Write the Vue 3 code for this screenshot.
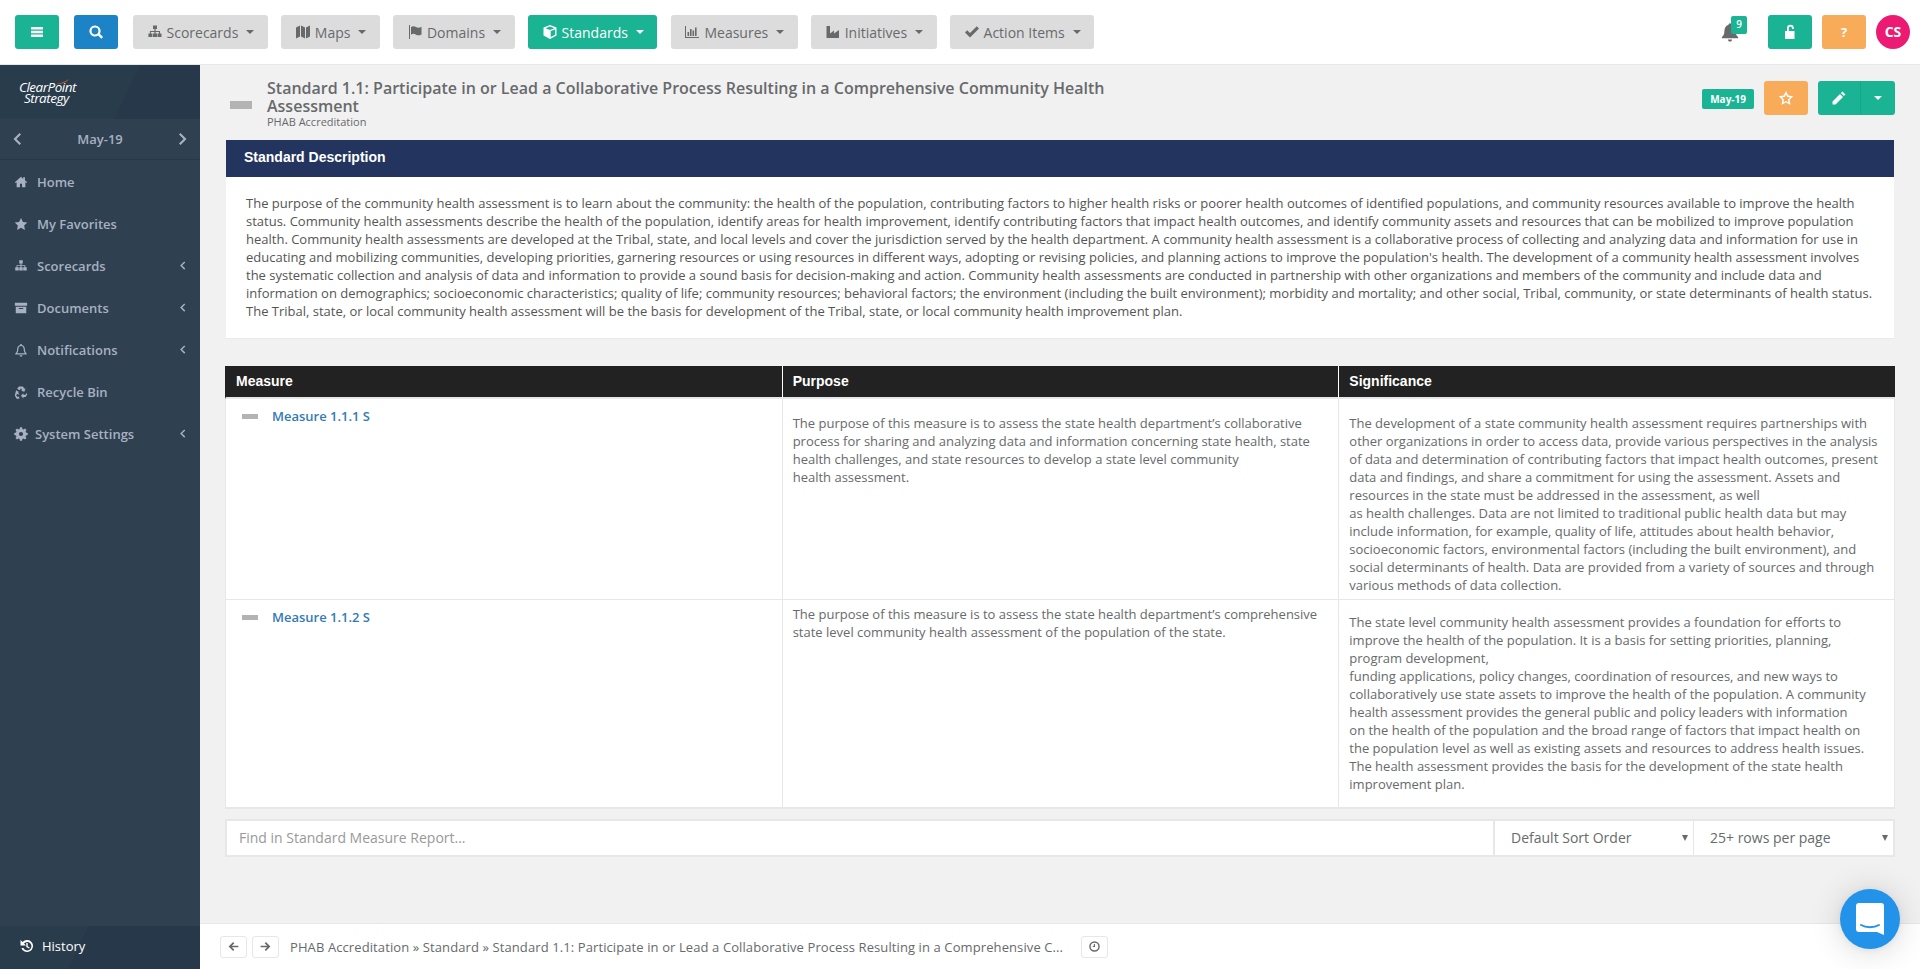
<script setup>
const icons = {
  bars: 'M2 3h12v2.4H2z M2 6.8h12v2.4H2z M2 10.6h12V13H2z',
  search: 'M7 1.5a5.5 5.5 0 1 0 3.1 10l3.2 3.2 1.7-1.7-3.2-3.2A5.5 5.5 0 0 0 7 1.5z M7 3.6a3.4 3.4 0 1 1 0 6.8 3.4 3.4 0 0 1 0-6.8z',
  sitemap: 'M6 1.5h4V5H8.6v2H13v2.5h1.5V13h-4V9.5h1.4V8H8.6v1.5H10V13H6V9.5h1.4V8H3.9v1.5h1.5V13h-4V9.5h1.5V7h4.5V5H6z',
  map: 'M1 3.5l4-2v11l-4 2z M6 1.5l4 2v11l-4-2z M11 3.5l4-2v11l-4 2z',
  flag: 'M2 1h1v14H2z M4 3c2-1.2 3.5-1 5 0s3.5.8 5.5-.2v7.7c-2 1-4 1.2-5.5.2s-3-1.2-5 0z',
  cube: 'M8 1l6.5 2.5v8L8 15l-6.5-3.5v-8z M8 2.6L3.6 4.2 8 5.9l4.4-1.7z M8.7 7.1v6l4.5-2.4V5.4z',
  chart: 'M1 2h1v11h13v1H1z M3.5 8h1.6v4H3.5z M6 5h1.6v7H6z M8.5 6.5h1.6V12H8.5z M11 3.5h1.6V12H11z',
  industry: 'M1.5 2H5v7.5l4-3v3l5-3.5V14H1.5z',
  check: 'M1 8.5l2.2-2.2L6 9.1l6.8-6.8L15 4.5l-9 9z',
  bell: 'M8 1a1.2 1.2 0 0 1 1.2 1.2c2.3.6 3.3 2.8 3.3 5.3s1 3.5 2 4.5v1h-13v-1c1-1 2-2 2-4.5s1-4.7 3.3-5.3A1.2 1.2 0 0 1 8 1z M6.3 14h3.4a1.7 1.7 0 0 1-3.4 0z',
  bellO: 'M8 1a1.2 1.2 0 0 1 1.2 1.2c2.3.6 3.3 2.8 3.3 5.3s1 3.5 2 4.5v1h-13v-1c1-1 2-2 2-4.5s1-4.7 3.3-5.3A1.2 1.2 0 0 1 8 1z M8 3.4c-2 0-3.1 1.8-3.1 4.1 0 2.1-.6 3.4-1.4 4.3h9c-.8-.9-1.4-2.2-1.4-4.3 0-2.3-1.1-4.1-3.1-4.1z M6.3 14h3.4a1.7 1.7 0 0 1-3.4 0z',
  unlock: 'M3 7h9.5v8H3z M5 7V4.2a3.4 3.4 0 0 1 6.8 0V5H10v-.8a1.6 1.6 0 0 0-3.2 0V7z',
  starO: 'M8 1l2.2 4.6 5 .7-3.6 3.5.9 5L8 12.4l-4.5 2.4.9-5L.8 6.3l5-.7z M8 4.2L6.8 6.9l-3 .4 2.2 2.1-.5 3L8 11l2.5 1.4-.5-3 2.2-2.1-3-.4z',
  star: 'M8 1l2.2 4.6 5 .7-3.6 3.5.9 5L8 12.4l-4.5 2.4.9-5L.8 6.3l5-.7z',
  pencil: 'M11.5 1.5l3 3-1.6 1.6-3-3z M9 4l3 3-7.5 7.5h-3v-3z',
  home: 'M8 2L1 8.2l.9 1L3 8.3V14h3.8v-4h2.4v4H13V8.3l1.1.9.9-1-2.5-2.2V2.5h-2v2.2z',
  archive: 'M1 2h14v3.5H1z M2 6.5h12V14H2z M5.5 8v1.2h5V8z',
  recycle: 'M5.6 1.6h4.6l1.6 2.8 1.4-.8-1.3 4-4-.9 1.4-.8-1.3-2.3L6.4 6 3.6 4.4z M13.4 7.4l1.8 3.2-1.9 3.2h-2.5v1.6l-2.9-3 2.9-3v1.6h2.4l1.2-2z M2.4 6l2.9 1.6-.5.9 1.5 2.6L3.2 10l.6-.4-1.2 2 1 1.8H6v2.2H3L.9 12z',
  cog: 'M6.8.3h2.4l.4 2 1.3.5 1.7-1.1 1.7 1.7-1.1 1.7.5 1.3 2 .4v2.4l-2 .4-.5 1.3 1.1 1.7-1.7 1.7-1.7-1.1-1.3.5-.4 2H6.8l-.4-2-1.3-.5-1.7 1.1-1.7-1.7 1.1-1.7-.5-1.3-2-.4V6.8l2-.4.5-1.3-1.1-1.7 1.7-1.7 1.7 1.1 1.3-.5z M8 5.6a2.4 2.4 0 1 0 0 4.8 2.4 2.4 0 0 0 0-4.8z',
  history: 'M8 2a6 6 0 1 1-5.6 8h2a4.2 4.2 0 1 0 .6-4.4L7 7.5H1.5V2l2 2A6 6 0 0 1 8 2z M7.3 5h1.4v3.2l2 1.2-.7 1.2-2.7-1.6z',
  left: 'M7.5 2.5L9 4 6 7h8v2H6l3 3-1.5 1.5L2 8z',
  right: 'M8.5 2.5L7 4l3 3H2v2h8l-3 3 1.5 1.5L14 8z',
  clock: 'M8 1.5a6.5 6.5 0 1 0 0 13 6.5 6.5 0 0 0 0-13z M8 3.3a4.7 4.7 0 1 1 0 9.4 4.7 4.7 0 0 1 0-9.4z M7.2 5h1.4v3.6H5.8V7.4h1.4z',
  angleL: 'M10.5 2L12 3.5 7.5 8l4.5 4.5-1.5 1.5-6-6z',
  angleR: 'M5.5 2L4 3.5 8.5 8 4 12.5 5.5 14l6-6z'
};

const topMenus = [
  { label: 'Scorecards', icon: 'sitemap' },
  { label: 'Maps', icon: 'map' },
  { label: 'Domains', icon: 'flag' },
  { label: 'Standards', icon: 'cube', active: true },
  { label: 'Measures', icon: 'chart' },
  { label: 'Initiatives', icon: 'industry' },
  { label: 'Action Items', icon: 'check' }
];

const sideMenus = [
  { label: 'Home', icon: 'home' },
  { label: 'My Favorites', icon: 'star' },
  { label: 'Scorecards', icon: 'sitemap', more: true },
  { label: 'Documents', icon: 'archive', more: true },
  { label: 'Notifications', icon: 'bellO', more: true },
  { label: 'Recycle Bin', icon: 'recycle' },
  { label: 'System Settings', icon: 'cog', more: true }
];
</script>

<template>
  <div class="page">
    <header class="topbar">
      <button class="btn teal square"><svg class="ic" viewBox="0 0 16 16"><path :d="icons.bars" /></svg></button>
      <button class="btn blue square"><svg class="ic" viewBox="0 0 16 16"><path :d="icons.search" /></svg></button>
      <button v-for="m in topMenus" :key="m.label" class="btn menu" :class="{ teal: m.active }">
        <svg class="ic" viewBox="0 0 16 16"><path :d="icons[m.icon]" /></svg>
        {{ m.label }}
        <span class="caret"></span>
      </button>
      <div class="top-right">
        <div class="bell">
          <svg class="bell-ic" viewBox="0 0 16 16"><path :d="icons.bell" /></svg>
          <span class="count">9</span>
        </div>
        <button class="btn teal square"><svg class="ic" viewBox="0 0 16 16"><path :d="icons.unlock" /></svg></button>
        <button class="btn orange square help">?</button>
        <div class="avatar">CS</div>
      </div>
    </header>

    <div class="body">
      <aside class="sidebar">
        <div class="logo">
          <svg class="swoosh" viewBox="0 0 20 8"><path d="M0 7C7 6 13 4 19 0 15 5 8 7 0 7z" /></svg>
          <div class="logo-a">ClearPoint</div>
          <div class="logo-b">Strategy</div>
        </div>
        <div class="date-row">
          <svg class="date-arrow" viewBox="0 0 16 16"><path :d="icons.angleL" /></svg>
          <span>May-19</span>
          <svg class="date-arrow" viewBox="0 0 16 16"><path :d="icons.angleR" /></svg>
        </div>
        <nav class="side-nav">
          <a v-for="s in sideMenus" :key="s.label" class="side-item">
            <svg class="ic" viewBox="0 0 16 16"><path :d="icons[s.icon]" /></svg>
            <span>{{ s.label }}</span>
            <svg v-if="s.more" class="more" viewBox="0 0 16 16"><path :d="icons.angleL" /></svg>
          </a>
        </nav>
        <div class="history">
          <svg class="ic" viewBox="0 0 16 16"><path :d="icons.history" /></svg>
          History
        </div>
      </aside>

      <main class="main">
        <div class="content">
          <div class="page-head">
            <div class="dash"></div>
            <div class="titles">
              <h1>Standard 1.1: Participate in or Lead a Collaborative Process Resulting in a Comprehensive Community Health Assessment</h1>
              <small>PHAB Accreditation</small>
            </div>
            <div class="head-actions">
              <span class="tag">May-19</span>
              <button class="btn orange square"><svg class="ic" viewBox="0 0 16 16"><path :d="icons.starO" /></svg></button>
              <div class="split">
                <button class="btn teal edit"><svg class="ic" viewBox="0 0 16 16"><path :d="icons.pencil" /></svg></button>
                <button class="btn teal drop"><span class="caret"></span></button>
              </div>
            </div>
          </div>

          <section class="desc">
            <div class="desc-title">Standard Description</div>
            <p class="desc-text">The purpose of the community health assessment is to learn about the community: the health of the population, contributing factors to higher health risks or poorer health outcomes of identified populations, and community resources available to improve the health status. Community health assessments describe the health of the population, identify areas for health improvement, identify contributing factors that impact health outcomes, and identify community assets and resources that can be mobilized to improve population health. Community health assessments are developed at the Tribal, state, and local levels and cover the jurisdiction served by the health department. A community health assessment is a collaborative process of collecting and analyzing data and information for use in educating and mobilizing communities, developing priorities, garnering resources or using resources in different ways, adopting or revising policies, and planning actions to improve the population's health. The development of a community health assessment involves the systematic collection and analysis of data and information to provide a sound basis for decision-making and action. Community health assessments are conducted in partnership with other organizations and members of the community and include data and information on demographics; socioeconomic characteristics; quality of life; community resources; behavioral factors; the environment (including the built environment); morbidity and mortality; and other social, Tribal, community, or state determinants of health status. The Tribal, state, or local community health assessment will be the basis for development of the Tribal, state, or local community health improvement plan.</p>
          </section>

          <table class="report">
            <thead>
              <tr>
                <th>Measure</th>
                <th>Purpose</th>
                <th>Significance</th>
              </tr>
            </thead>
            <tbody>
              <tr>
                <td><div class="measure"><span class="mini-dash"></span><a>Measure 1.1.1 S</a></div></td>
                <td><p class="top10">The purpose of this measure is to assess the state health department’s collaborative process for sharing and analyzing data and information concerning state health, state health challenges, and state resources to develop a state level community<br>health assessment.</p></td>
                <td><p class="top10">The development of a state community health assessment requires partnerships with other organizations in order to access data, provide various perspectives in the analysis of data and determination of contributing factors that impact health outcomes, present data and findings, and share a commitment for using the assessment. Assets and resources in the state must be addressed in the assessment, as well<br>as health challenges. Data are not limited to traditional public health data but may include information, for example, quality of life, attitudes about health behavior, socioeconomic factors, environmental factors (including the built environment), and social determinants of health. Data are provided from a variety of sources and through various methods of data collection.</p></td>
              </tr>
              <tr>
                <td><div class="measure"><span class="mini-dash"></span><a>Measure 1.1.2 S</a></div></td>
                <td><p>The purpose of this measure is to assess the state health department’s comprehensive state level community health assessment of the population of the state.</p></td>
                <td><p class="top8">The state level community health assessment provides a foundation for efforts to improve the health of the population. It is a basis for setting priorities, planning, program development,<br>funding applications, policy changes, coordination of resources, and new ways to collaboratively use state assets to improve the health of the population. A community health assessment provides the general public and policy leaders with information<br>on the health of the population and the broad range of factors that impact health on the population level as well as existing assets and resources to address health issues. The health assessment provides the basis for the development of the state health improvement plan.</p></td>
              </tr>
            </tbody>
          </table>

          <div class="filters">
            <div class="find">Find in Standard Measure Report...</div>
            <div class="pick sort">Default Sort Order<span class="tri"></span></div>
            <div class="pick rows">25+ rows per page<span class="tri"></span></div>
          </div>
        </div>

        <footer class="crumbs">
          <button class="nav-btn"><svg viewBox="0 0 16 16"><path :d="icons.left" /></svg></button>
          <button class="nav-btn"><svg viewBox="0 0 16 16"><path :d="icons.right" /></svg></button>
          <span class="path">PHAB Accreditation » Standard » Standard 1.1: Participate in or Lead a Collaborative Process Resulting in a Comprehensive C...</span>
          <button class="nav-btn clock"><svg viewBox="0 0 16 16"><path :d="icons.clock" /></svg></button>
        </footer>
      </main>
    </div>

    <div class="chat">
      <svg viewBox="0 0 28 32" width="28" height="32">
        <path fill="#fff" d="M3 0h22a3 3 0 0 1 3 3v29l-7-3H3a3 3 0 0 1-3-3V3a3 3 0 0 1 3-3z" />
        <path fill="none" stroke="#2393ea" stroke-width="2" stroke-linecap="round" d="M5 22c5 3 13 3 18 0" />
      </svg>
    </div>
  </div>
</template>

<style>
body {
  background: #f1f1f1;
}
</style>

<style scoped>
.page {
  position: relative;
  height: 969px;
  overflow: hidden;
  display: flex;
  flex-direction: column;
  font-family: "Open Sans", sans-serif;
  font-size: 13px;
  color: #676a6c;
  background: #f1f1f1;
}
svg path {
  fill-rule: evenodd;
}
.ic {
  width: 16px;
  height: 16px;
  fill: currentColor;
  flex: none;
}
button {
  font-family: inherit;
  font-size: 14px;
  border: none;
}

/* top bar */
.topbar {
  height: 65px;
  box-sizing: border-box;
  flex: none;
  display: flex;
  align-items: flex-start;
  padding: 15px 10px 0 15px;
  background: #fff;
  border-bottom: 1px solid #e7e7e7;
}
.btn {
  height: 34px;
  border-radius: 3px;
  display: flex;
  align-items: center;
  justify-content: center;
  background: #dcdcdc;
  color: #676a6c;
  padding: 0;
}
.square {
  width: 44px;
  margin-right: 15px;
}
.menu {
  padding: 0 13.5px;
  margin-right: 13.5px;
  gap: 4px;
}
.teal {
  background: #1ab394;
  color: #fff;
}
.blue {
  background: #1c84c6;
  color: #fff;
}
.orange {
  background: #f8ac59;
  color: #fff;
}
.caret {
  width: 0;
  height: 0;
  margin-left: 4px;
  border-left: 4px solid transparent;
  border-right: 4px solid transparent;
  border-top: 4px solid currentColor;
}
.top-right {
  margin-left: auto;
  display: flex;
  align-items: flex-start;
}
.top-right .square {
  margin-right: 10px;
}
.help {
  font-weight: 700;
  font-size: 13px;
}
.bell {
  position: relative;
  width: 26px;
  height: 34px;
  margin-right: 21px;
}
.bell-ic {
  position: absolute;
  left: -1px;
  top: 7px;
  width: 20px;
  height: 20px;
  fill: #676a6c;
}
.count {
  position: absolute;
  left: 10px;
  top: 1px;
  width: 16px;
  height: 18px;
  border-radius: 2px;
  background: #1ab394;
  color: #fff;
  font-size: 10px;
  font-weight: 600;
  line-height: 16px;
  text-align: center;
}
.avatar {
  width: 34px;
  height: 34px;
  border-radius: 50%;
  background: #ec1a72;
  color: #fff;
  font-size: 14px;
  font-weight: 700;
  line-height: 34px;
  text-align: center;
}

.body {
  flex: 1;
  min-height: 0;
  display: flex;
}

/* sidebar */
.sidebar {
  width: 200px;
  flex: none;
  display: flex;
  flex-direction: column;
  background: #2f4050;
  color: #a7b1c2;
  font-weight: 600;
}
.logo {
  position: relative;
  height: 54px;
  box-sizing: border-box;
  padding: 17px 0 0 19px;
  background: linear-gradient(115deg, #293c4c 0, #293c4c 62%, #263849 62%);
  color: #fff;
  font-size: 13.5px;
  font-style: italic;
  font-weight: 400;
  line-height: 11px;
  letter-spacing: -0.5px;
}
.logo-b {
  padding-left: 5px;
}
.swoosh {
  position: absolute;
  left: 55px;
  top: 14px;
  width: 15px;
  height: 6px;
  fill: #d4622a;
}
.date-row {
  height: 41px;
  box-sizing: border-box;
  display: flex;
  align-items: center;
  justify-content: space-between;
  padding: 0 9px;
  border-bottom: 1px solid #293846;
}
.date-arrow {
  width: 16px;
  height: 16px;
  fill: #a7b1c2;
}
.side-nav {
  display: flex;
  flex-direction: column;
  padding-top: 1px;
}
.side-item {
  position: relative;
  height: 42px;
  display: flex;
  align-items: center;
  gap: 9px;
  padding-left: 14px;
}
.side-item:last-child {
  gap: 7px;
}
.side-item .ic {
  width: 14px;
  height: 14px;
}
.more {
  position: absolute;
  left: 177px;
  top: 15px;
  width: 11px;
  height: 11px;
  fill: #a7b1c2;
}
.history {
  margin-top: auto;
  height: 43px;
  display: flex;
  align-items: center;
  gap: 7px;
  padding: 0 0 3px 19px;
  box-sizing: border-box;
  background: linear-gradient(115deg, #293c4c 0, #293c4c 40%, #263849 40%);
  color: #fff;
  font-weight: 400;
}

/* main */
.main {
  flex: 1;
  min-width: 0;
  display: flex;
  flex-direction: column;
}
.content {
  flex: 1;
  padding: 0 26px;
}
.page-head {
  height: 75px;
  display: flex;
  align-items: flex-start;
}
.dash {
  width: 22px;
  height: 8px;
  background: #b3b3b3;
  margin: 36px 15px 0 4px;
  flex: none;
}
.titles {
  width: 870px;
  padding-top: 14px;
}
h1 {
  margin: 0;
  font-size: 16px;
  font-weight: 600;
  line-height: 18px;
  color: #676a6c;
}
small {
  display: block;
  font-size: 11px;
  line-height: 13px;
}
.head-actions {
  margin-left: auto;
  display: flex;
  align-items: flex-start;
  padding-top: 16px;
  margin-right: -1px;
}
.tag {
  height: 20px;
  margin: 8px 10px 0 0;
  padding: 0 8px;
  border-radius: 2px;
  background: #1ab394;
  color: #fff;
  font-size: 10px;
  font-weight: 700;
  line-height: 20px;
}
.head-actions .square {
  margin-right: 10px;
}
.split {
  display: flex;
}
.edit {
  width: 42px;
  border-radius: 3px 0 0 3px;
}
.drop {
  width: 35px;
  border-radius: 0 3px 3px 0;
  border-left: 1px solid #18a689;
}
.drop .caret {
  margin-left: 0;
}

/* description */
.desc {
  background: #fff;
  border-bottom: 1px solid #e9e9e9;
}
.desc-title {
  height: 37px;
  box-sizing: border-box;
  padding-left: 18px;
  background: #23355e;
  color: #fff;
  font-family: "Liberation Sans", sans-serif;
  font-size: 14px;
  font-weight: 700;
  line-height: 35px;
}
.desc-text {
  margin: 0;
  padding: 17px 20px 18px;
  line-height: 18px;
  color: #555;
}

/* table */
.report {
  width: 1670px;
  margin: 27px -1px 0;
  table-layout: fixed;
  border-collapse: separate;
  border-spacing: 0;
  background: #fff;
}
th {
  box-sizing: border-box;
  height: 33px;
  padding: 0 10px 1px;
  background: #222;
  background-clip: padding-box;
  color: #fff;
  font-family: "Liberation Sans", sans-serif;
  font-size: 14px;
  font-weight: 700;
  text-align: left;
  border-bottom: 2px solid #e7e7e7;
  border-left: 1px solid #fff;
}
th:first-child {
  border-left-color: #222;
}
td {
  padding: 5px 10px;
  vertical-align: top;
  line-height: 18px;
  border-bottom: 1px solid #e7e7e7;
  border-left: 1px solid #e7e7e7;
}
td:last-child {
  padding-right: 14px;
  border-right: 1px solid #e7e7e7;
}
tbody tr:last-child td {
  border-bottom-width: 2px;
}
td p {
  margin: 0;
}
td .top10 {
  margin-top: 10px;
}
td .top8 {
  margin: 8px 0 9px;
}
.measure {
  display: flex;
  align-items: center;
  gap: 14px;
  padding: 3px 0 0 6px;
  font-weight: 600;
}
.measure a {
  color: #337ab7;
}
.mini-dash {
  width: 16px;
  height: 5px;
  background: #b3b3b3;
}

/* filters */
.filters {
  height: 38px;
  box-sizing: border-box;
  margin: 10px -1px 0;
  display: flex;
  background: #fff;
  border: 2px solid #e7e7e7;
  font-size: 14px;
  line-height: 34px;
}
.find {
  flex: 1;
  padding-left: 12px;
  color: #999;
}
.pick {
  position: relative;
  box-sizing: border-box;
  border-left: 1px solid #e7e7e7;
}
.sort {
  width: 200px;
  border-left-width: 2px;
  padding-left: 16px;
}
.rows {
  width: 200px;
  padding-left: 16px;
}
.tri {
  position: absolute;
  right: 5px;
  top: 14px;
  border-left: 3px solid transparent;
  border-right: 3px solid transparent;
  border-top: 6px solid #676a6c;
}

/* footer */
.crumbs {
  height: 46px;
  box-sizing: border-box;
  flex: none;
  display: flex;
  align-items: center;
  gap: 5px;
  padding: 0 0 0 20px;
  background: #fff;
  border-top: 1px solid #e7e7e7;
}
.nav-btn {
  width: 27px;
  height: 22px;
  padding: 0;
  display: flex;
  align-items: center;
  justify-content: center;
  background: #fff;
  border: 1px solid #e7e7e7;
  border-radius: 3px;
}
.nav-btn svg {
  width: 13px;
  height: 13px;
  fill: #676a6c;
}
.path {
  margin: 0 13px 0 6px;
  letter-spacing: 0.1px;
}

.chat {
  position: absolute;
  right: 20px;
  bottom: 20px;
  width: 60px;
  height: 60px;
  border-radius: 50%;
  background: #2393ea;
  display: flex;
  align-items: center;
  justify-content: center;
  box-shadow: 0 1px 6px rgba(0, 0, 0, 0.06), 0 2px 32px rgba(0, 0, 0, 0.16);
}
</style>
